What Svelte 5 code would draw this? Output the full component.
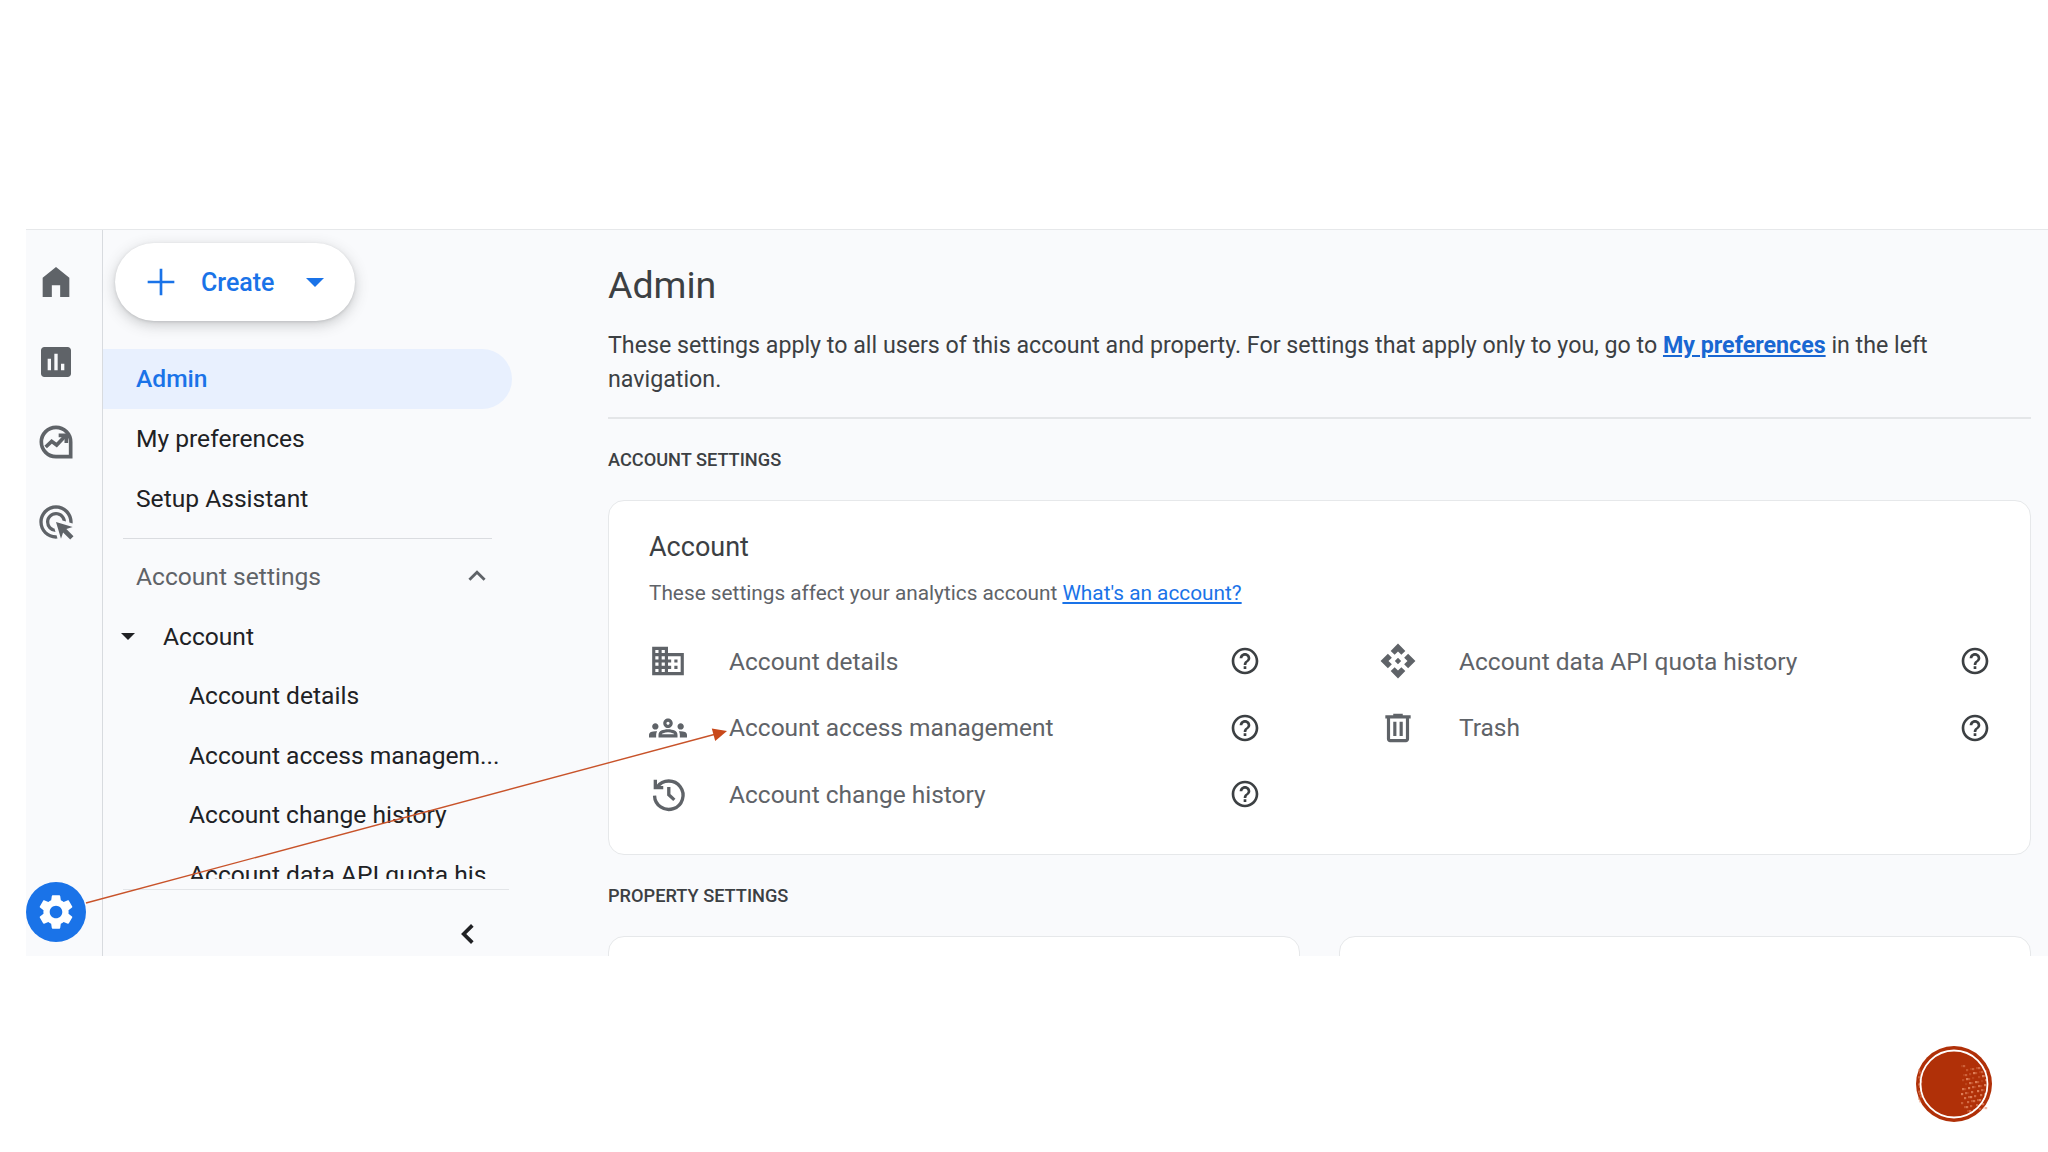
<script>
  // material-ish icon paths, 24 viewBox
  const icons = {
    domain: 'M12 7V3H2v18h20V7H12zM6 19H4v-2h2v2zm0-4H4v-2h2v2zm0-4H4V9h2v2zm0-4H4V5h2v2zm4 12H8v-2h2v2zm0-4H8v-2h2v2zm0-4H8V9h2v2zm0-4H8V5h2v2zm10 12h-8v-2h2v-2h-2v-2h2v-2h-2V9h8v10zm-2-8h-2v2h2v-2zm0 4h-2v2h2v-2z',
    groups: 'M4 13c1.1 0 2-.9 2-2s-.9-2-2-2-2 .9-2 2 .9 2 2 2zm1.13 1.1C4.76 14.04 4.39 14 4 14c-.99 0-1.93.21-2.78.58C.48 14.9 0 15.62 0 16.43V18h4.5v-1.61c0-.83.23-1.61.63-2.29zM20 13c1.1 0 2-.9 2-2s-.9-2-2-2-2 .9-2 2 .9 2 2 2zm4 3.43c0-.81-.48-1.53-1.22-1.85C21.93 14.21 20.99 14 20 14c-.39 0-.76.04-1.13.1.4.68.63 1.46.63 2.29V18H24v-1.57zM16.24 13.65c-1.17-.52-2.61-.9-4.24-.9s-3.07.39-4.24.9C6.68 14.13 6 15.21 6 16.39V18h12v-1.61c0-1.18-.68-2.26-1.76-2.74zM8.07 16c.09-.23.13-.39.91-.69.97-.38 1.99-.56 3.02-.56s2.05.18 3.02.56c.77.3.81.46.91.69H8.07zM12 8c.55 0 1 .45 1 1s-.45 1-1 1-1-.45-1-1 .45-1 1-1m0-2c-1.66 0-3 1.34-3 3s1.34 3 3 3 3-1.34 3-3-1.34-3-3-3z',
    api: 'M14 12l-2 2-2-2 2-2 2 2zm-2-6l2.12 2.12 2.5-2.5L12 1 7.38 5.62l2.5 2.5L12 6zm-6 6l2.12-2.12-2.5-2.5L1 12l4.62 4.62 2.5-2.5L6 12zm12 0l-2.12 2.12 2.5 2.5L23 12l-4.62-4.62-2.5 2.5L18 12zm-6 6l-2.12-2.12-2.5 2.5L12 23l4.62-4.62-2.5-2.5L12 18z',
    trash: 'M15 4V3H9v1H4v2h1v13c0 1.1.9 2 2 2h10c1.1 0 2-.9 2-2V6h1V4h-5zm2 15H7V6h10v13zM9 8h2v9H9zm4 0h2v9h-2z',
    help: 'M11 18h2v-2h-2v2zm1-16C6.48 2 2 6.48 2 12s4.48 10 10 10 10-4.48 10-10S17.52 2 12 2zm0 18c-4.41 0-8-3.59-8-8s3.59-8 8-8 8 3.59 8 8-3.59 8-8 8zm0-14c-2.21 0-4 1.79-4 4h2c0-1.1.9-2 2-2s2 .9 2 2c0 2-3 1.75-3 5h2c0-2.25 3-2.5 3-5 0-2.21-1.79-4-4-4z'
  }
  const gear = 'M19.14 12.94c.04-.3.06-.61.06-.94 0-.32-.02-.64-.07-.94l2.03-1.58c.18-.14.23-.41.12-.61l-1.92-3.32c-.12-.22-.37-.29-.59-.22l-2.39.96c-.5-.38-1.03-.7-1.62-.94l-.36-2.54c-.04-.24-.24-.41-.48-.41h-3.84c-.24 0-.43.17-.47.41l-.36 2.54c-.59.24-1.13.57-1.62.94l-2.39-.96c-.22-.08-.47 0-.59.22L2.74 8.87c-.12.21-.08.47.12.61l2.03 1.58c-.05.3-.09.63-.09.94s.02.64.07.94l-2.03 1.58c-.18.14-.23.41-.12.61l1.92 3.32c.12.22.37.29.59.22l2.39-.96c.5.38 1.03.7 1.62.94l.36 2.54c.05.24.24.41.48.41h3.84c.24 0 .44-.17.47-.41l.36-2.54c.59-.24 1.13-.56 1.62-.94l2.39.96c.22.08.47 0 .59-.22l1.92-3.32c.12-.22.07-.47-.12-.61l-2.01-1.58zM12 15.6c-1.98 0-3.6-1.62-3.6-3.6s1.62-3.6 3.6-3.6 3.6 1.62 3.6 3.6-1.62 3.6-3.6 3.6z'

  const leftRows = [
    { icon: 'domain', label: 'Account details' },
    { icon: 'groups', label: 'Account access management' },
    { icon: 'history', label: 'Account change history' }
  ]
  const rightRows = [
    { icon: 'api', label: 'Account data API quota history' },
    { icon: 'trash', label: 'Trash' }
  ]
  const subItems = ['Account details', 'Account access managem...', 'Account change history', 'Account data API quota his']

  // speckles on the corner badge
  const specks = []
  for (let i = 0; i < 70; i++) {
    specks.push({
      x: 46 + ((i * 37) % 25),
      y: 20 + ((i * 53) % 46),
      o: 0.2 + ((i * 13) % 7) / 10
    })
  }
  for (let i = 0; i < 14; i++) {
    specks.push({ x: 3 + ((i * 7) % 3), y: 24 + i * 2.4, o: 0.5 })
  }
</script>

{#snippet rowList(rows)}
  <div class="rows">
    {#each rows as row}
      <div class="row">
        <span class="rowIcon">
          {#if row.icon === 'history'}
            <svg viewBox="0 0 24 24" class="ic stroke">
              <path d="M5.2 7.5A9 9 0 1 1 3.5 13" />
              <path d="M4 3v5h5" />
              <path d="M12.5 7.5v5l3.5 3.2" />
            </svg>
          {:else}
            <svg viewBox="0 0 24 24" class="ic"><path d={icons[row.icon]} /></svg>
          {/if}
        </span>
        <span class="rowLabel">{row.label}</span>
        <svg viewBox="0 0 24 24" class="help"><path d={icons.help} /></svg>
      </div>
    {/each}
  </div>
{/snippet}

<div class="page">
  <div class="frame">
    <nav class="rail">
      <div class="railIcons">
        <svg viewBox="0 0 24 24" class="railIcon"><path d="M4 21V9.5L12 3l8 6.5V21h-5.5v-7h-5v7z" /></svg>
        <svg viewBox="0 0 24 24" class="railIcon"><path d="M19 3H5c-1.1 0-2 .9-2 2v14c0 1.1.9 2 2 2h14c1.1 0 2-.9 2-2V5c0-1.1-.9-2-2-2zM9 17H7v-7h2v7zm4 0h-2V7h2v10zm4 0h-2v-4h2v4z" /></svg>
        <svg viewBox="0 0 24 24" class="railIcon trend">
          <path d="M12 3.2a8.8 8.8 0 1 0 0 17.6h8.8V12A8.8 8.8 0 0 0 12 3.2z" />
          <path d="M5.8 15l3.6-3.4 3 2.2 5-5.2" />
          <path d="M13.6 8h4.6v4.6" />
        </svg>
        <svg viewBox="0 0 24 24" class="railIcon"><path d="M11.71 17.99A5.993 5.993 0 0 1 6 12c0-3.31 2.69-6 6-6 3.22 0 5.84 2.53 5.99 5.71l-2.1-.63C15.48 9.31 13.89 8 12 8c-2.21 0-4 1.79-4 4 0 1.89 1.31 3.48 3.08 3.89l.63 2.1zM22 12c0 .3-.01.6-.04.9l-1.97-.59c.01-.1.01-.21.01-.31 0-4.42-3.58-8-8-8s-8 3.58-8 8 3.58 8 8 8c.1 0 .21 0 .31-.01l.59 1.97c-.3.03-.6.04-.9.04-5.52 0-10-4.48-10-10S6.48 2 12 2s10 4.48 10 10zm-3.77 4.26L22 15l-10-3 3 10 1.26-3.77 4.27 4.27 1.98-1.98-4.28-4.26z" /></svg>
      </div>
      <div class="gearBtn">
        <svg viewBox="0 0 24 24"><path d={gear} /></svg>
      </div>
    </nav>

    <aside class="panel">
      <button class="create">
        <svg viewBox="0 0 24 24" class="plus"><path d="M11 2h2v9h9v2h-9v9h-2v-9H2v-2h9z" /></svg>
        <span class="createLabel">Create</span>
        <span class="createCaret"></span>
      </button>

      <div class="navItem active">Admin</div>
      <div class="navItem">My preferences</div>
      <div class="navItem">Setup Assistant</div>
      <div class="navDivider"></div>

      <div class="scroller">
        <div class="navItem group">
          Account settings
          <svg viewBox="0 0 24 24" class="chevUp"><path d="M5 15.5l7-7 7 7" /></svg>
        </div>
        <div class="navItem sub1"><span class="caretSmall"></span>Account</div>
        {#each subItems as item}
          <div class="navItem sub2">{item}</div>
        {/each}
      </div>

      <div class="panelFoot">
        <svg viewBox="0 0 24 24" class="chevLeft"><path d="M16 4l-8 8 8 8" /></svg>
      </div>
    </aside>

    <main class="main">
      <h1 class="title">Admin</h1>
      <p class="intro">
        These settings apply to all users of this account and property. For settings that apply only to you, go to
        <a href="#prefs" class="strong">My preferences</a> in the left navigation.
      </p>
      <div class="mainDivider"></div>

      <h2 class="section">ACCOUNT SETTINGS</h2>
      <section class="card">
        <h3 class="cardTitle">Account</h3>
        <p class="cardSub">These settings affect your analytics account <a href="#acc">What's an account?</a></p>
        <div class="columns">
          {@render rowList(leftRows)}
          {@render rowList(rightRows)}
        </div>
      </section>

      <h2 class="section second">PROPERTY SETTINGS</h2>
      <div class="propCards">
        <div class="card stub"></div>
        <div class="card stub"></div>
      </div>
    </main>

    <!-- annotation arrow drawn over the screenshot -->
    <svg class="arrow" viewBox="0 0 2022 727">
      <line x1="60" y1="673" x2="690" y2="504" />
      <path d="M701 501l-15.2-2.6 3.4 12.6z" />
    </svg>
  </div>

  <footer class="slideFoot">
    <svg viewBox="0 0 78 78" class="badge">
      <circle cx="39" cy="39" r="38" fill="#b03008" />
      {#each specks as s}
        <rect x={s.x} y={s.y} width="2.2" height="2.2" fill="#e8906a" opacity={s.o} />
      {/each}
      <circle cx="39" cy="39" r="33.5" fill="none" stroke="#fff" stroke-width="1.8" />
    </svg>
  </footer>
</div>

<style>
  :global(body) {
    margin: 0;
    background: #fff;
  }
  .page {
    width: 2048px;
    height: 1152px;
    padding: 229px 0 0 26px;
    box-sizing: border-box;
    overflow: hidden;
    font-family: Roboto, "Liberation Sans", sans-serif;
    color: #202124;
  }
  .frame {
    position: relative;
    display: grid;
    grid-template-columns: 77px 505px 1fr;
    grid-template-rows: minmax(0, 1fr);
    height: 727px;
    background: #f9fafc;
    border-top: 1px solid #e6e8ea;
    box-sizing: border-box;
    overflow: hidden;
  }

  /* left rail */
  .rail {
    display: flex;
    flex-direction: column;
    justify-content: space-between;
    border-right: 1px solid #d8dbdf;
    padding-bottom: 14px;
  }
  .railIcons {
    display: flex;
    flex-direction: column;
    align-items: center;
    width: 60px;
    padding-top: 32px;
    gap: 40px;
  }
  .railIcon {
    width: 40px;
    height: 40px;
    fill: #5f6368;
  }
  .railIcon.trend {
    fill: none;
    stroke: #5f6368;
    stroke-width: 2.2;
  }
  .gearBtn {
    width: 60px;
    height: 60px;
    border-radius: 50%;
    background: #1a73e8;
    display: flex;
    align-items: center;
    justify-content: center;
  }
  .gearBtn svg {
    width: 42px;
    height: 42px;
    fill: #fff;
  }

  /* side panel */
  .panel {
    display: flex;
    flex-direction: column;
    min-height: 0;
  }
  .create {
    align-self: flex-start;
    margin: 13px 0 28px 12px;
    width: 240px;
    height: 78px;
    flex: none;
    border: 0;
    border-radius: 39px;
    background: #fff;
    box-shadow: 0 4px 14px rgba(60, 64, 67, 0.26), 0 1px 3px rgba(60, 64, 67, 0.16);
    display: flex;
    align-items: center;
    padding: 0 0 0 30px;
    font-family: inherit;
    color: #1a73e8;
  }
  .plus {
    width: 32px;
    height: 32px;
    fill: #1a73e8;
    flex: none;
  }
  .createLabel {
    margin-left: 24px;
    font-size: 25px;
    font-weight: 500;
  }
  .createCaret {
    margin-left: 31px;
    border-left: 9px solid transparent;
    border-right: 9px solid transparent;
    border-top: 9px solid #1a73e8;
  }
  .navItem {
    height: 60px;
    flex: none;
    display: flex;
    align-items: center;
    padding: 0 0 2px 33px;
    box-sizing: border-box;
    font-size: 24.6px;
    white-space: nowrap;
    color: #202124;
  }
  .navItem.active {
    width: 409px;
    background: #e8f0fe;
    border-radius: 0 30px 30px 0;
    color: #1a73e8;
    font-weight: 500;
  }
  .navDivider {
    height: 1px;
    width: 369px;
    margin: 9px 0 8px 20px;
    background: #dadce0;
    flex: none;
  }
  .scroller {
    flex: 1;
    min-height: 0;
    overflow: hidden;
    margin-bottom: 10px;
  }
  .group {
    width: 409px;
    justify-content: space-between;
    color: #5f6368;
    padding-right: 22px;
  }
  .chevUp {
    width: 26px;
    height: 26px;
    fill: none;
    stroke: #5f6368;
    stroke-width: 2.6;
  }
  .sub1 {
    padding-left: 18px;
  }
  .caretSmall {
    width: 0;
    margin-right: 28px;
    border-left: 7px solid transparent;
    border-right: 7px solid transparent;
    border-top: 7px solid #202124;
  }
  .sub2 {
    height: 59.6px;
    padding-left: 86px;
  }
  .panelFoot {
    flex: none;
    height: 67px;
    width: 386px;
    margin-left: 20px;
    border-top: 1px solid #e3e5e8;
    box-sizing: border-box;
    display: flex;
    justify-content: flex-end;
    align-items: center;
    padding: 22px 28px 0 0;
  }
  .chevLeft {
    width: 26px;
    height: 26px;
    fill: none;
    stroke: #202124;
    stroke-width: 3.4;
  }

  /* main column */
  .main {
    padding: 32px 17px 0 0;
    min-width: 0;
  }
  .title {
    margin: 0;
    font-size: 37.5px;
    line-height: 46px;
    font-weight: 400;
    color: #3c4043;
  }
  .intro {
    margin: 21px 0 0;
    font-size: 23.22px;
    line-height: 33.5px;
    color: #3c4043;
  }
  .intro a,
  .cardSub a {
    color: #1a73e8;
  }
  .intro .strong {
    color: #1967d2;
    font-weight: 700;
  }
  .mainDivider {
    height: 2px;
    background: #e4e6e8;
    margin-top: 21px;
  }
  .section {
    margin: 30px 0 0;
    font-size: 18.2px;
    line-height: 22px;
    font-weight: 500;
    color: #3c4043;
  }
  .section.second {
    margin-top: 30px;
  }
  .card {
    background: #fff;
    border: 1px solid #e6e8ea;
    border-radius: 16px;
    box-sizing: border-box;
  }
  section.card {
    margin-top: 29px;
    height: 355px;
    padding: 28px 41px 0 40px;
  }
  .cardTitle {
    margin: 0;
    font-size: 27px;
    line-height: 36px;
    font-weight: 400;
    color: #3c4043;
  }
  .cardSub {
    margin: 14px 0 0;
    font-size: 20.8px;
    line-height: 28px;
    color: #5f6368;
  }
  .columns {
    display: grid;
    grid-template-columns: 612px 612px;
    column-gap: 118px;
    margin-top: 21px;
  }
  .rows {
    display: flex;
    flex-direction: column;
  }
  .row {
    height: 66.5px;
    display: flex;
    align-items: center;
    justify-content: space-between;
  }
  .rowIcon {
    width: 38px;
    display: flex;
    justify-content: center;
    flex: none;
  }
  .rowIcon .ic {
    width: 38px;
    height: 38px;
    fill: #5f6368;
  }
  .ic.stroke {
    fill: none;
    stroke: #5f6368;
    stroke-width: 2.1;
  }
  .rowLabel {
    flex: 1;
    margin-left: 42px;
    font-size: 24.5px;
    color: #5f6368;
  }
  .help {
    width: 32px;
    height: 32px;
    fill: #3c4043;
    flex: none;
  }
  .propCards {
    display: grid;
    grid-template-columns: 1fr 1fr;
    gap: 39px;
    margin-top: 29px;
  }
  .stub {
    height: 120px;
  }

  /* annotation */
  .arrow {
    position: absolute;
    left: 0;
    top: 0;
    width: 2022px;
    height: 727px;
    pointer-events: none;
  }
  .arrow line {
    stroke: #c8532a;
    stroke-width: 1.4;
  }
  .arrow path {
    fill: #c8481a;
  }

  /* slide footer with the round badge */
  .slideFoot {
    display: flex;
    justify-content: flex-end;
    padding: 89px 55px 0 0;
  }
  .badge {
    width: 78px;
    height: 78px;
  }
</style>
